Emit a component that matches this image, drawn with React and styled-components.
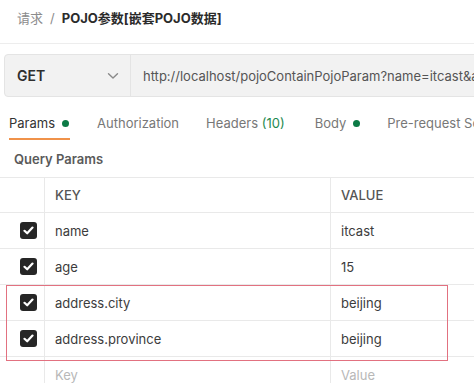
import React from "react";
import styled, { createGlobalStyle } from "styled-components";

const Global = createGlobalStyle`
  html, body { margin: 0; padding: 0; background: #ffffff; }
  body { font-family: Inter, "Noto Sans CJK SC", sans-serif; overflow: hidden; }
  * { box-sizing: border-box; }
`;

const Page = styled.div`
  width: 474px;
  height: 383px;
  overflow: hidden;
  background: #fff;
  font-family: Inter, "Noto Sans CJK SC", sans-serif;
`;

const Breadcrumb = styled.div`
  height: 44px;
  padding: 0 17px 8px;
  display: flex;
  align-items: center;
  gap: 7px;
  border-bottom: 1px solid #ededed;
  font-size: 13px;
  white-space: nowrap;
`;

const Crumb = styled.span`
  color: ${(p) => (p.$current ? "#2b2b2b" : "#8c8c8c")};
  font-weight: ${(p) => (p.$current ? 700 : 400)};
`;

const RequestBar = styled.div`
  margin: 10px 0 0 4px;
  width: 520px;
  height: 43px;
  display: flex;
  background: #f2f2f2;
  border: 1px solid #e4e4e4;
  border-radius: 4px;
  overflow: hidden;
`;

const Method = styled.div`
  flex: 0 0 126px;
  display: flex;
  align-items: center;
  justify-content: space-between;
  padding: 0 11px 0 12px;
  border-right: 1px solid #e4e4e4;
  font-size: 14px;
  font-weight: 600;
  color: #2e2e2e;
`;

const Url = styled.div`
  flex: 1;
  min-width: 0;
  display: flex;
  align-items: center;
  padding-left: 12px;
  font-size: 13px;
  color: #555;
  white-space: nowrap;
  overflow: hidden;
`;

const Tabs = styled.div`
  margin-top: 14px;
  padding-left: 9px;
  display: flex;
  gap: 27px;
  white-space: nowrap;
`;

const Tab = styled.div`
  flex-shrink: 0;
  height: 29px;
  line-height: 24px;
  font-size: 13px;
  display: flex;
  align-items: flex-start;
  gap: 7px;
  margin-right: ${(p) => p.$extra || 0}px;
  color: ${(p) => (p.$active ? "#333" : "#777")};
  border-bottom: 2px solid ${(p) => (p.$active ? "#f0924a" : "transparent")};
  padding-right: ${(p) => (p.$active ? "1px" : "0")};
`;

const Dot = styled.span`
  width: 7px;
  height: 7px;
  border-radius: 50%;
  background: #0b7a45;
  margin-top: 9px;
`;

const Count = styled.span`
  color: #1e8a4f;
`;

const SectionTitle = styled.div`
  padding: 8px 14px 0;
  height: 37px;
  line-height: 22px;
  font-size: 13px;
  font-weight: 600;
  color: #5a5a5a;
`;

const Table = styled.div`
  border-top: 1px solid #e9e9e9;
`;

const Row = styled.div`
  display: grid;
  grid-template-columns: 45px 286px 1fr;
  height: ${(p) => (p.$header ? "35px" : "36px")};
  border-bottom: 1px solid #e9e9e9;
`;

const Cell = styled.div`
  display: flex;
  align-items: center;
  padding-left: 10px;
  font-size: 13px;
  color: ${(p) => (p.$placeholder ? "#b8b8b8" : p.$head ? "#555" : "#3c3c3c")};
  font-weight: ${(p) => (p.$head ? 500 : 400)};
  border-right: ${(p) => (p.$last ? "none" : "1px solid #e9e9e9")};
  white-space: nowrap;
`;

const CheckCell = styled.div`
  display: flex;
  align-items: center;
  justify-content: flex-end;
  padding-right: 7px;
  border-right: 1px solid #e9e9e9;
`;

const Box = styled.span`
  width: 17px;
  height: 17px;
  border-radius: 3px;
  background: #262626;
  display: flex;
  align-items: center;
  justify-content: center;
`;

const Group = styled.div`
  position: relative;
`;

const Highlight = styled.div`
  position: absolute;
  top: 0px;
  left: 6px;
  width: 442px;
  height: 76px;
  border: 1.5px solid #e27180;
  pointer-events: none;
`;

const Check = () => (
  <Box>
    <svg width="11" height="9" viewBox="0 0 11 9">
      <polyline points="1.5,4.8 4.2,7.3 9.5,1.6" fill="none" stroke="#fff" strokeWidth="2.2" strokeLinecap="round" strokeLinejoin="round" />
    </svg>
  </Box>
);

const Chevron = () => (
  <svg width="12" height="8" viewBox="0 0 12 8">
    <polyline points="1.5,1.8 6,6 10.5,1.8" fill="none" stroke="#8a8a8a" strokeWidth="1.4" strokeLinecap="round" strokeLinejoin="round" />
  </svg>
);

const ParamRow = ({ k, v }) => (
  <Row>
    <CheckCell>
      <Check />
    </CheckCell>
    <Cell>{k}</Cell>
    <Cell $last>{v}</Cell>
  </Row>
);

export default function App() {
  return (
    <Page>
      <Global />
      <Breadcrumb>
        <Crumb>请求</Crumb>
        <Crumb>/</Crumb>
        <Crumb $current>POJO参数[嵌套POJO数据]</Crumb>
      </Breadcrumb>
      <RequestBar>
        <Method>
          GET
          <Chevron />
        </Method>
        <Url>http://localhost/pojoContainPojoParam?name=itcast&amp;age=15</Url>
      </RequestBar>
      <Tabs>
        <Tab $active>
          Params <Dot />
        </Tab>
        <Tab>Authorization</Tab>
        <Tab $extra={3}>
          <span>
            Headers <Count>(10)</Count>
          </span>
        </Tab>
        <Tab>
          Body <Dot />
        </Tab>
        <Tab>Pre-request Script</Tab>
      </Tabs>
      <SectionTitle>Query Params</SectionTitle>
      <Table>
        <Row $header>
          <CheckCell />
          <Cell $head>KEY</Cell>
          <Cell $head $last>VALUE</Cell>
        </Row>
        <ParamRow k="name" v="itcast" />
        <ParamRow k="age" v="15" />
        <Group>
          <ParamRow k="address.city" v="beijing" />
          <ParamRow k="address.province" v="beijing" />
          <Highlight />
        </Group>
        <Row>
          <CheckCell />
          <Cell $placeholder>Key</Cell>
          <Cell $placeholder $last>Value</Cell>
        </Row>
      </Table>
    </Page>
  );
}
